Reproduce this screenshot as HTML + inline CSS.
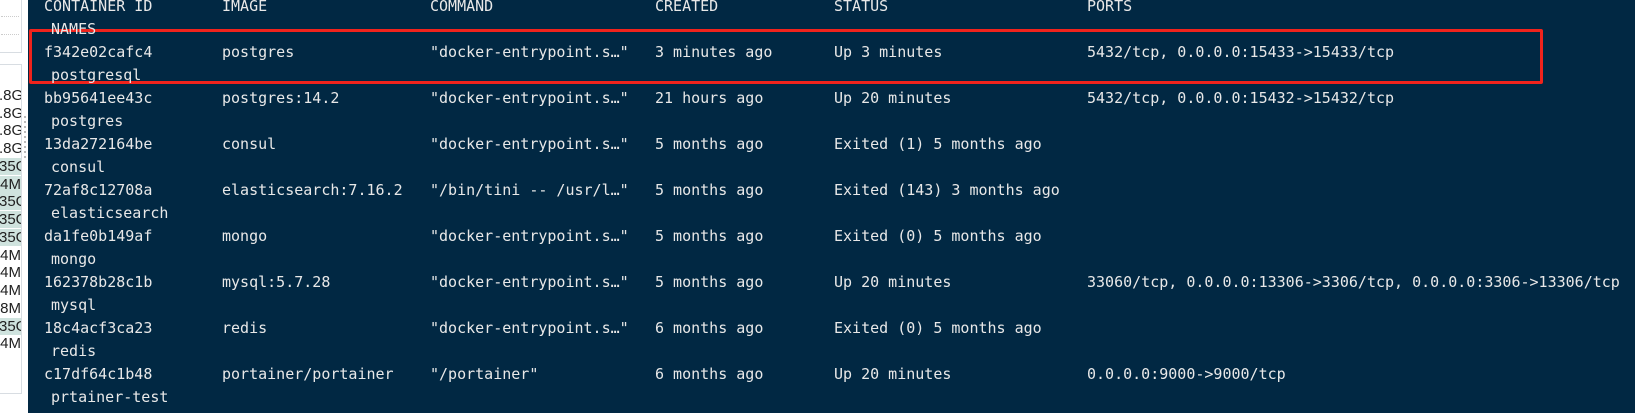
<!DOCTYPE html>
<html><head><meta charset="utf-8"><style>
html,body{margin:0;padding:0;width:1635px;height:413px;overflow:hidden;background:#fff}
#left{position:absolute;left:0;top:0;width:28px;height:413px;background:#fff}
.box{position:absolute;left:-2px;width:22px;border:1px solid #d8dde2;background:#fff}
.r{position:absolute;right:7px;font:15px "Liberation Sans",sans-serif;color:#222;height:17px;line-height:17px;width:22px;text-align:right;overflow:hidden;white-space:nowrap}
.hl{background:#cfe3de}
#term{position:absolute;left:28px;top:0;width:1607px;height:413px;background:#012843;overflow:hidden}
.t{position:absolute;font:15px "DejaVu Sans Mono","Liberation Mono",monospace;color:#e8e8e8;white-space:pre;line-height:23px}
#red{position:absolute;left:29px;top:29px;width:1508px;height:49px;border:3px solid #f0231c;border-radius:2px}
.dots{position:absolute;left:24px;top:116px;width:2px;height:44px;background:repeating-linear-gradient(#bbb 0 2px,transparent 2px 5px)}
</style></head><body>
<div id="left">
<div class="box" style="top:-1px;height:52px"><div style="position:absolute;left:2px;right:2px;top:16px;border-top:1px dotted #ccc"></div><div style="position:absolute;left:2px;right:2px;top:34px;border-top:1px dotted #ccc"></div></div>
<div class="box" style="top:64px;height:328px"></div>
<div class="r" style="top:87px">.8G</div>
<div class="r" style="top:105px">.8G</div>
<div class="r" style="top:122px">.8G</div>
<div class="r" style="top:140px">.8G</div>
<div class="r hl" style="top:158px">35G</div>
<div class="r hl" style="top:176px">4M</div>
<div class="r hl" style="top:193px">35G</div>
<div class="r hl" style="top:211px">35G</div>
<div class="r hl" style="top:229px">35G</div>
<div class="r" style="top:247px">4M</div>
<div class="r" style="top:264px">4M</div>
<div class="r" style="top:282px">4M</div>
<div class="r" style="top:300px">8M</div>
<div class="r hl" style="top:318px">35G</div>
<div class="r" style="top:335px">4M</div>
<div class="dots"></div>
</div>
<div id="term"></div>
<div id="red"></div>
<div id="txt"></div>
<script>
var cols=[44,222,430,655,834,1087];
var rows=[
["CONTAINER ID","IMAGE","COMMAND","CREATED","STATUS","PORTS","NAMES"],
["f342e02cafc4","postgres","\"docker-entrypoint.s…\"","3 minutes ago","Up 3 minutes","5432/tcp, 0.0.0.0:15433->15433/tcp","postgresql"],
["bb95641ee43c","postgres:14.2","\"docker-entrypoint.s…\"","21 hours ago","Up 20 minutes","5432/tcp, 0.0.0.0:15432->15432/tcp","postgres"],
["13da272164be","consul","\"docker-entrypoint.s…\"","5 months ago","Exited (1) 5 months ago","","consul"],
["72af8c12708a","elasticsearch:7.16.2","\"/bin/tini -- /usr/l…\"","5 months ago","Exited (143) 3 months ago","","elasticsearch"],
["da1fe0b149af","mongo","\"docker-entrypoint.s…\"","5 months ago","Exited (0) 5 months ago","","mongo"],
["162378b28c1b","mysql:5.7.28","\"docker-entrypoint.s…\"","5 months ago","Up 20 minutes","33060/tcp, 0.0.0.0:13306->3306/tcp, 0.0.0.0:3306->13306/tcp","mysql"],
["18c4acf3ca23","redis","\"docker-entrypoint.s…\"","6 months ago","Exited (0) 5 months ago","","redis"],
["c17df64c1b48","portainer/portainer","\"/portainer\"","6 months ago","Up 20 minutes","0.0.0.0:9000->9000/tcp","prtainer-test"]];
var h="";
rows.forEach(function(r,i){
 var top=-4.8+45.92*i;
 for(var c=0;c<6;c++){if(r[c])h+='<div class="t" style="left:'+cols[c]+'px;top:'+top+'px">'+r[c]+'</div>';}
 h+='<div class="t" style="left:51px;top:'+(top+22.96)+'px">'+r[6]+'</div>';
});
document.getElementById("txt").innerHTML=h;
</script>
</body></html>
